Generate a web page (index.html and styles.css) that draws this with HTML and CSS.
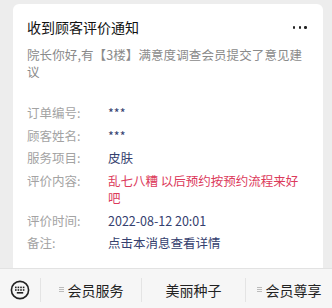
FILE: index.html
```html
<!DOCTYPE html>
<html lang="zh-CN">
<head>
<meta charset="utf-8">
<link rel="stylesheet" href="styles.css">
</head>
<body>
<div class="page">
  <div class="card">
    <div class="head">
      <div class="title">收到顾客评价通知</div>
      <div class="more"><span></span><span></span><span></span></div>
    </div>
    <div class="intro">院长你好,有【3楼】满意度调查会员提交了意见建议</div>
    <div class="rows">
      <div class="row"><div class="label">订单编号:</div><div class="value">***</div></div>
      <div class="row"><div class="label">顾客姓名:</div><div class="value">***</div></div>
      <div class="row"><div class="label">服务项目:</div><div class="value">皮肤</div></div>
      <div class="row"><div class="label">评价内容:</div><div class="value red">乱七八糟 以后预约按预约流程来好吧</div></div>
      <div class="row"><div class="label">评价时间:</div><div class="value">2022-08-12 20:01</div></div>
      <div class="row"><div class="label">备注:</div><div class="value">点击本消息查看详情</div></div>
    </div>
  </div>
  <div class="bar">
    <div class="kbd">
      <svg width="20" height="20" viewBox="0 0 20 20">
        <circle cx="10" cy="10" r="8.6" fill="none" stroke="#222" stroke-width="1.6"/>
        <g fill="#222">
          <rect x="5" y="6.6" width="1.6" height="1.6"/>
          <rect x="7.6" y="6.6" width="1.6" height="1.6"/>
          <rect x="10.2" y="6.6" width="1.6" height="1.6"/>
          <rect x="12.8" y="6.6" width="1.6" height="1.6"/>
          <rect x="5" y="9.2" width="1.6" height="1.6"/>
          <rect x="7.6" y="9.2" width="1.6" height="1.6"/>
          <rect x="10.2" y="9.2" width="1.6" height="1.6"/>
          <rect x="12.8" y="9.2" width="1.6" height="1.6"/>
          <rect x="6.8" y="12" width="6.4" height="1.6"/>
        </g>
      </svg>
    </div>
    <div class="tab"><span class="menu"></span>会员服务</div>
    <div class="tab">美丽种子</div>
    <div class="tab"><span class="menu"></span>会员尊享</div>
  </div>
</div>
</body>
</html>
```
FILE: styles.css
```css
* { box-sizing: border-box; }
html, body { margin: 0; padding: 0; }
body {
  background: #ededed;
  font-family: "Noto Sans CJK SC", "Noto Sans", sans-serif;
  width: 332px;
  height: 308px;
  overflow: hidden;
}
.page {
  display: flex;
  flex-direction: column;
  height: 308px;
}
.card {
  flex: 1;
  margin: 4px 9px 0 13px;
  background: #fff;
  border-radius: 6px 6px 0 0;
  padding: 15px 14px 0 14px;
  overflow: hidden;
}
.head {
  display: flex;
  justify-content: space-between;
  align-items: center;
}
.title {
  font-size: 14px;
  line-height: 17px;
  color: #111;
}
.more {
  display: flex;
  gap: 3.2px;
  margin-right: 2px;
}
.more span {
  width: 2.6px;
  height: 2.6px;
  background: #222;
  border-radius: 50%;
}
.intro {
  margin-top: 11px;
  font-size: 12.5px;
  line-height: 16.5px;
  color: #8a8a8a;
  letter-spacing: 0.1px;
}
.rows {
  margin-top: 24px;
  display: flex;
  flex-direction: column;
  gap: 5px;
}
.row {
  display: flex;
  font-size: 12.5px;
  line-height: 17.5px;
}
.label {
  width: 81px;
  flex: none;
  color: #a3a3a3;
}
.value {
  color: #34406e;
  flex: 1;
}
.value.red {
  color: #dc3a5b;
}
.bar {
  flex: none;
  height: 40px;
  background: #f6f6f6;
  border-top: 1px solid #e2e2e2;
  display: grid;
  grid-template-columns: 40px 101px 104px 1fr;
  align-items: center;
  padding-top: 2px;
}
.kbd {
  display: flex;
  justify-content: center;
  align-items: center;
  height: 100%;
}
.kbd svg { display: block; }
.tab {
  height: 24px;
  border-left: 1px solid #e4e4e4;
  display: flex;
  align-items: center;
  justify-content: center;
  font-size: 14px;
  color: #222;
}
.menu {
  width: 5px;
  height: 5px;
  margin-right: 4px;
  border-top: 1px solid #bbb;
  border-bottom: 1px solid #bbb;
  position: relative;
}
.menu::after {
  content: "";
  position: absolute;
  left: 0;
  right: 0;
  top: 1px;
  border-top: 1px solid #bbb;
}
```
